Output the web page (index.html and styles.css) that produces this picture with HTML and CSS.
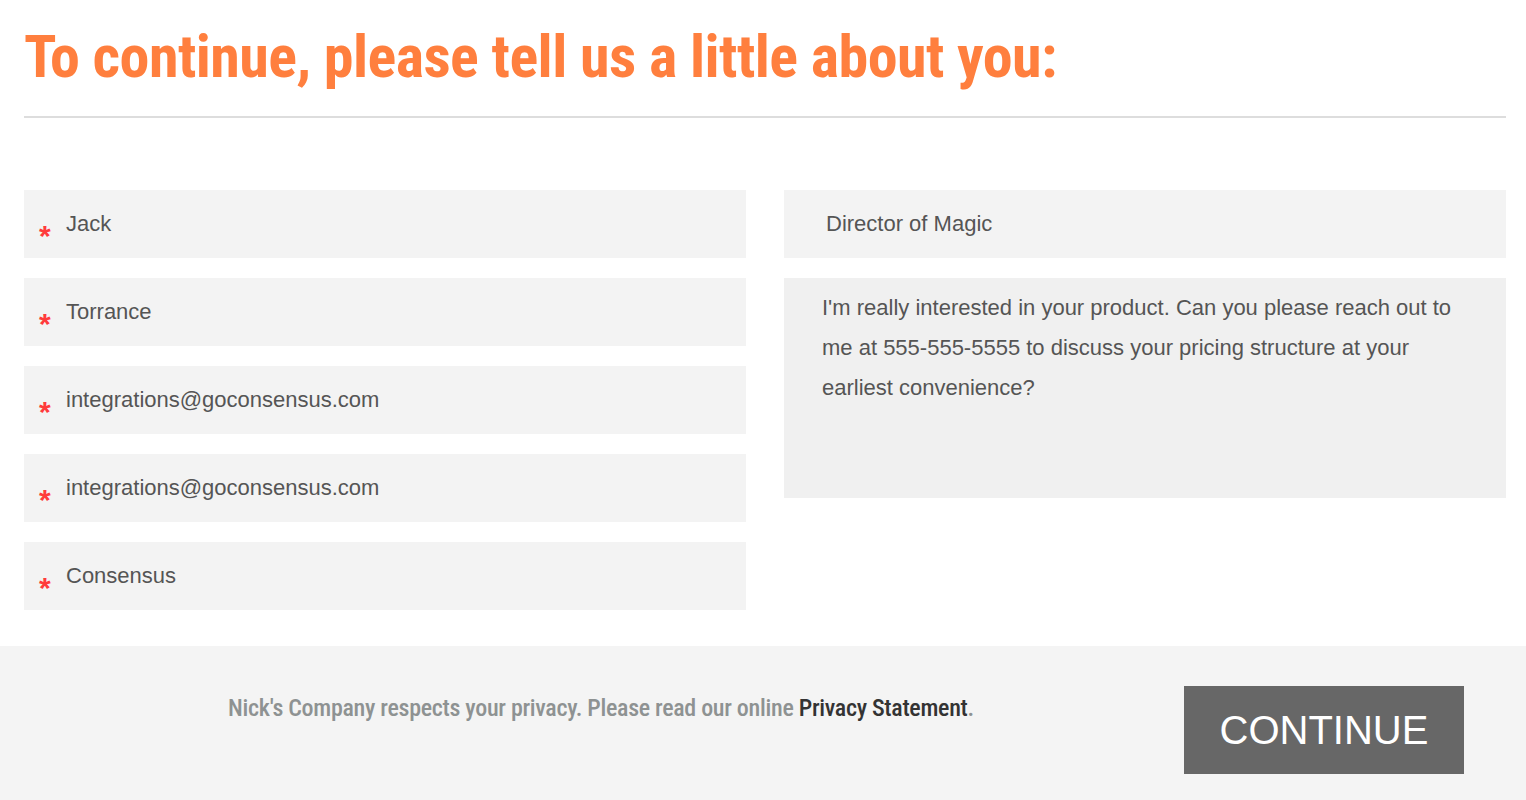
FILE: index.html
```html
<!DOCTYPE html>
<html lang="en">
<head>
<meta charset="utf-8">
<title>Tell us about you</title>
<link rel="stylesheet" href="styles.css">
</head>
<body>
<div class="page">
  <header class="head">
    <h1 class="title">To continue, please tell us a little about you:</h1>
    <div class="rule"></div>
  </header>
  <form class="form">
    <div class="col">
      <div class="field"><span class="req">*</span><span class="val">Jack</span></div>
      <div class="field"><span class="req">*</span><span class="val">Torrance</span></div>
      <div class="field"><span class="req">*</span><span class="val">integrations@goconsensus.com</span></div>
      <div class="field"><span class="req">*</span><span class="val">integrations@goconsensus.com</span></div>
      <div class="field"><span class="req">*</span><span class="val">Consensus</span></div>
    </div>
    <div class="col">
      <div class="field"><span class="req blank"></span><span class="val">Director of Magic</span></div>
      <div class="area">I'm really interested in your product. Can you please reach out to me at 555-555-5555 to discuss your pricing structure at your earliest convenience?</div>
    </div>
  </form>
</div>
<footer class="foot">
  <p class="privacy">Nick's Company respects your privacy. Please read our online <a class="link" href="#">Privacy Statement</a>.</p>
  <button class="btn" type="button">CONTINUE</button>
</footer>
</body>
</html>
```

FILE: styles.css
```css
html, body {
  margin: 0;
  padding: 0;
  background: #ffffff;
}
body {
  font-family: "Liberation Sans", Arial, sans-serif;
  color: #555555;
}
.page {
  padding: 0 20px 36px 24px;
}
.head {
  padding-top: 22px;
}
.title {
  margin: 0;
  font-family: "Roboto Condensed", Roboto, sans-serif;
  font-stretch: condensed;
  font-weight: 700;
  font-size: 60px;
  line-height: 70px;
  color: #ff7f3e;
  letter-spacing: -0.55px;
}
.rule {
  margin-top: 24px;
  height: 2px;
  background: #dddddd;
}
.form {
  margin-top: 72px;
  display: grid;
  grid-template-columns: 722px 722px;
  column-gap: 38px;
}
.col {
  display: flex;
  flex-direction: column;
  gap: 20px;
}
.field {
  height: 68px;
  background: #f3f3f3;
  display: flex;
  align-items: center;
}
.req {
  width: 42px;
  box-sizing: border-box;
  padding-left: 15px;
  padding-top: 24px;
  color: #ff3b3b;
  font-size: 30px;
  font-weight: 700;
  line-height: 30px;
  height: 54px;
}
.req.blank {
  height: 0;
}
.val {
  font-size: 22px;
  color: #555555;
}
.area {
  height: 220px;
  box-sizing: border-box;
  background: #f0f0f0;
  padding: 10px 44px 0 38px;
  font-size: 22px;
  line-height: 40px;
  color: #555555;
}
.foot {
  background: #f4f4f4;
  height: 154px;
  box-sizing: border-box;
  padding: 40px 62px 0 0;
  display: flex;
  align-items: flex-start;
}
.privacy {
  flex: 1;
  margin: 0;
  padding: 6px 0 0 18px;
  text-align: center;
  font-family: "Roboto Condensed", Roboto, sans-serif;
  font-stretch: condensed;
  font-weight: 500;
  font-size: 24px;
  line-height: 32px;
  letter-spacing: -0.3px;
  color: #8e9292;
}
.link {
  color: #333333;
  text-decoration: none;
}
.btn {
  width: 280px;
  height: 88px;
  border: 0;
  background: #676767;
  color: #ffffff;
  font-family: "Liberation Sans", Arial, sans-serif;
  font-size: 40px;
  padding: 0;
}
```
